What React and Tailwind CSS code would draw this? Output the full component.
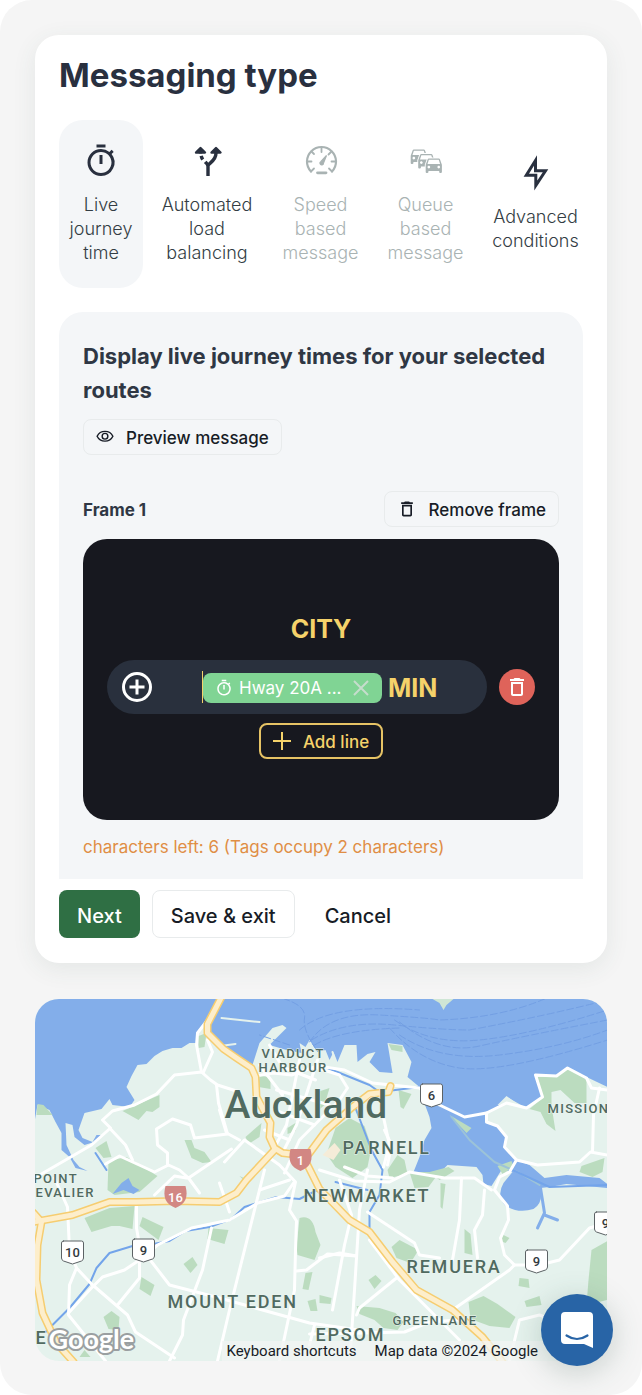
import React, { useState } from "react";
import { MdOutlineTimer, MdDeleteOutline } from "react-icons/md";

const RouteIcon = () => (
  <svg viewBox="0 0 36 36" className="size-9" fill="none" stroke="currentColor" strokeWidth="3.4">
    <path d="M19 33V23c0-3 8-4.500 8-13V7" />
    <path d="M19 22.500c-.8-1.700-1.800-2.500-2.800-3.700M13.800 16.500c-.9-1.300-1.300-2.300-1.600-3.700M11.500 10.500V7" />
    <path
      d="M7 9.500 11.500 5 16 9.500zM22.500 9.500 27 5l4.500 4.500z"
      fill="currentColor"
      strokeLinejoin="round"
      strokeWidth="2.400"
    />
  </svg>
);

const SpeedIcon = () => (
  <svg viewBox="0 0 36 36" className="size-9" fill="none" stroke="currentColor" strokeWidth="1.8" strokeLinecap="round">
    <path d="M8 28.500a14.500 14.500 0 1 1 21 0" strokeWidth="2.200" />
    <path d="M8 28.500l3-3M29 28.500l-3-3M4.500 18.500h4M28.500 18.500h4M18.500 4.500V9M8.500 8.500 11 11M28.500 8.500l-3 3" />
    <path d="M14.500 29.800H23" strokeWidth="2.800" />
    <path d="M23.500 12.500 20.500 20a1.800 1.800 0 1 1-2.500-1.500z" fill="currentColor" strokeWidth="1.200" />
  </svg>
);

const carPath =
  "M18.920 6.010C18.720 5.420 18.160 5 17.500 5h-11c-.66 0-1.210.42-1.420 1.010L3 12v8c0 .55.45 1 1 1h1c.55 0 1-.45 1-1v-1h12v1c0 .55.45 1 1 1h1c.55 0 1-.45 1-1v-8l-2.080-5.990zM6.500 16c-.83 0-1.500-.67-1.500-1.500S5.670 13 6.500 13s1.500.67 1.500 1.500S7.330 16 6.500 16zm11 0c-.83 0-1.500-.67-1.500-1.500s.67-1.500 1.500-1.500 1.500.67 1.500 1.500-.67 1.500-1.500 1.500zM5 11l1.500-4.500h11L19 11H5z";

const QueueIcon = () => (
  <svg viewBox="0 0 36 36" className="size-9">
    {[
      [0, 2],
      [7.500, 6.500],
      [15, 11],
    ].map(([x, y]) => (
      <g key={x} transform={`translate(${x} ${y}) scale(.9)`}>
        <path d="M3 12 5.500 5h13L21 12v7H3z" fill="#fff" stroke="#fff" strokeWidth="2" />
        <path d={carPath} fill="currentColor" fillRule="evenodd" />
      </g>
    ))}
  </svg>
);

const BoltIcon = () => (
  <svg viewBox="0 0 36 36" className="size-9" fill="none" stroke="currentColor" strokeWidth="3">
    <path d="M17.500 5.500v10.300h10L17.800 30.500V20.300H8.300z" />
  </svg>
);

const EyeIcon = () => (
  <svg viewBox="0 0 24 24" className="size-[18px]" fill="none" stroke="currentColor" strokeWidth="1.900">
    <path d="M1.500 11C3.500 6.800 7.500 4.500 12 4.500s8.500 2.300 10.500 6.500c-2 4.200-6 6.500-10.500 6.500S3.500 15.200 1.500 11z" />
    <circle cx="12" cy="11" r="3.800" />
  </svg>
);

const tabs = [
  { id: "live", label: "Live journey time", Icon: () => <MdOutlineTimer className="size-9" />, width: "w-[84px]" },
  { id: "load", label: "Automated load balancing", Icon: RouteIcon, width: "w-[116px]" },
  { id: "speed", label: "Speed based message", Icon: SpeedIcon, width: "w-[99px]", disabled: true },
  { id: "queue", label: "Queue based message", Icon: QueueIcon, width: "w-[99px]", disabled: true },
  { id: "advanced", label: "Advanced conditions", Icon: BoltIcon, width: "w-[109px]" },
];

// Map geometry
const water = [
  "M35 999H608V1087L587 1077 568 1068 557 1076 536 1075 543 1097 527 1108 507 1097 501 1105 487 1113V1122L498 1125 507 1137 505 1147 517 1160 530 1165 545 1178 567 1175 600 1178 608 1184V1188L567 1184 550 1187 541 1188Q544 1203 534 1209 518 1214 505 1205 497 1195 504 1183L513 1172 502 1170 492 1186 484 1184 483 1175 477 1167 448 1165 441 1172 424 1180 414 1172 420 1157 425 1140 432 1128 430 1117 423 1098 420 1087 408 1077 412 1062 403 1045 388 1043 393 1073 380 1072 370 1062 376 1052 368 1054 358 1062 357 1045H345L338 1062 334 1052 330 1060 326 1050 318 1052 310 1040 306 1047 300 1043 302 1053 287 1050 270 1045 287 1028 283 1025 273 1028 260 1043 253 1065 240 1057 230 1056 213 1035 207 1022 198 1033 197 1043 190 1043 182 1048 173 1048 163 1051 155 1056 147 1064 138 1065 132 1076 127 1087 135 1100 130 1107 113 1105 110 1099 102 1109 85 1113 79 1130 83 1138 93 1142 97 1135H102L98 1141 85 1145 75 1137 73 1125 66 1123 67 1145 74 1160 80 1167 88 1171 76 1168 70 1157 62 1150V1133L56 1122 50 1110 38 1105 35 1122z",
  "M413 1171 440 1174 422 1177z",
];

const parks = [
  "M38 1104 44 1105 53 1115H37z",
  "M123 1111 160 1095V1107L153 1112 147 1111 139 1120z",
  "M199 1036 207 1033 205 1047 199 1048z",
  "M185 1140 192 1140 195 1148 205 1152 212 1162 203 1163 192 1158z",
  "M96 1148 107 1141 112 1157 104 1158z",
  "M109 1161 127 1157 158 1176 140 1192 115 1195 108 1190z",
  "M85 1218 110 1208 135 1206 133 1229 120 1226 112 1226 92 1232z",
  "M143 1217 164 1227 159 1240 140 1226z",
  "M209 1228 229 1230 225 1244 208 1239z",
  "M184 1264 193 1257 198 1265 191 1273z",
  "M142 1277 155 1285 151 1296 140 1289z",
  "M104 1317 112 1311 120 1317 119 1330 109 1329z",
  "M300 1218Q313 1214 316 1232L321 1245 315 1260 298 1255 297 1247z",
  "M306 1273 313 1272 309 1290 303 1289z",
  "M308 1301 316 1299 318 1311 311 1311z",
  "M320 1295 332 1298 331 1304 320 1303z",
  "M357 1306 380 1308 396 1313 404 1322 398 1330 384 1328 375 1320 360 1314z",
  "M260 1075 271 1078V1089L259 1087z",
  "M246 1137 262 1123 260 1137 249 1144z",
  "M288 1128 299 1121 296 1131 288 1134z",
  "M318 1092 330 1088 325 1105 317 1112z",
  "M336 1128 350 1118 365 1126 372 1147 368 1167 353 1178 336 1167 327 1154z",
  "M389 1044 403 1046V1052L392 1050z",
  "M399 1090 412 1094 404 1109 401 1107z",
  "M398 1155 405 1160 408 1174 390 1178 388 1170z",
  "M410 1172 440 1172 429 1187 415 1188z",
  "M538 1077 557 1077 568 1069 587 1078V1103L575 1103 561 1090 552 1092 552 1106 556 1131 547 1124 541 1112 530 1109 543 1098z",
  "M582 1166 605 1158 603 1172 593 1177 580 1172z",
  "M450 1115 472 1128 467 1133z",
  "M498 1166 512 1161 514 1167 503 1174z",
  "M392 1247 400 1240 419 1250 411 1263 397 1258z",
  "M465 1229 471 1234 473 1255 465 1253z",
  "M369 1280 376 1275 382 1281 375 1289z",
  "M441 1183 446 1184 443 1209 441 1207z",
  "M504 1235 510 1238 506 1243 501 1241z",
  "M520 1278 529 1279 530 1288 519 1286z",
  "M469 1302 484 1296 498 1304 516 1317 510 1328 490 1326 471 1319z",
  "M525 1301 540 1296 542 1305 527 1307z",
  "M592 1250 608 1241V1300L587 1305 589 1280z",
  "M240 1176 251 1181 246 1182z",
  "M430 1172 449 1167 455 1171 440 1180z",
  "M85 1350 91 1357 80 1357z",
];

const roads = [
  "M35 1178 92 1145 111 1128 103 1120 113 1111 135 1105 157 1094 175 1075 202 1072 211 1080 218 1085 240 1092",
  "M111 1129 126 1145 133 1160",
  "M202 1072 197 1045 198 1033 208 1020",
  "M204 1072 213 1052 208 1040",
  "M217 1085 219 1103 228 1134 195 1138 191 1125 173 1119 157 1129 158 1145 168 1153 168 1165",
  "M106 1164 120 1156 155 1172 169 1165 180 1170 189 1178 232 1149",
  "M189 1178 200 1193M155 1195 175 1176 187 1178",
  "M55 1178 68 1207 70 1250 77 1268 92 1284 128 1315 136 1332 175 1358",
  "M77 1268 70 1285 69 1315 106 1361",
  "M69 1313 90 1290 103 1277 125 1270 143 1258 158 1245 192 1228 230 1220 258 1203 285 1196 294 1183",
  "M137 1205V1228L140 1245 140 1278 118 1305",
  "M143 1250 170 1285 220 1298 310 1323 380 1333",
  "M265 1170 230 1310 218 1361M212 1228 203 1270 184 1320 183 1335 170 1361",
  "M220 1183 230 1212",
  "M240 1140 227 1133 220 1110M225 1162 245 1140 280 1165 296 1182 290 1210 297 1221 296 1250 295 1290 280 1361",
  "M260 1190 290 1180M297 1271 307 1270 328 1254 357 1256",
  "M285 1173 300 1140 340 1100 348 1088 340 1075 318 1068",
  "M256 1076 274 1073 292 1075 318 1066 345 1070 373 1083 420 1088 440 1105 465 1117 487 1113 507 1103 527 1108 543 1097 536 1075 557 1076 568 1068 587 1078 592 1088 608 1090",
  "M270 1045 283 1067 316 1080M260 1065 283 1095M300 1060 287 1125 270 1157M318 1060 297 1125 282 1155M277 1090 330 1105M275 1110 315 1125M265 1130 290 1140",
  "M487 1113V1122L498 1126 507 1137 505 1147 517 1160 538 1165 580 1162 591 1152 608 1155M600 1088 594 1115 593 1152",
  "M517 1160 510 1172 500 1177 495 1190 508 1206 509 1220 501 1238 505 1255 515 1265",
  "M320 1170 355 1181 390 1182 410 1172 445 1178 475 1178 492 1190",
  "M385 1130 392 1145 388 1165M345 1167 368 1176 393 1178",
  "M382 1108 390 1145 384 1167M368 1170 360 1210 355 1290 351 1350",
  "M368 1212 415 1243 420 1255 440 1258M370 1240 400 1280 460 1340",
  "M462 1178 460 1220 453 1260M485 1190 483 1215 475 1230 478 1258",
  "M453 1310 510 1270 515 1265H540L560 1260 590 1228 608 1223",
  "M340 1180 352 1215 345 1245 333 1310M320 1258 340 1253 357 1256",
  "M397 1278 360 1308 357 1315M310 1334 365 1333 405 1332 430 1322 458 1320",
  "M510 1361 520 1320 540 1315 575 1328M310 1345 315 1325",
];

const motorways = [
  "M223 995 208 1024V1033L224 1049 237 1058 252 1068 256 1077 257 1097 271 1123 270 1137 275 1148 283 1153 300 1155 308 1165 320 1189 350 1220 370 1232 393 1262 417 1290 453 1310 483 1337 503 1362",
  "M275 1150 247 1180 237 1193 220 1202 177 1201 137 1202 110 1202 73 1215 34 1222",
  "M34 1213 42 1222 38 1245 37 1280 43 1313 57 1343 74 1362",
  "M391 1086 389 1092 370 1094 353 1107 327 1130 310 1153 300 1156",
];

const streams = [
  "M46 1332 70 1308 90 1284 97 1268 110 1253 133 1246M143 1246 170 1241 186 1231 210 1227 232 1219 245 1207 277 1197 300 1199 318 1190",
  "M328 1068 370 1085 380 1092 420 1087M356 1108 372 1150 383 1170 380 1195 370 1212V1228M336 1182 368 1190",
  "M96 1153 107 1170M513 1170 550 1187 608 1185",
];

const ferries = [
  "M317 1050Q303 1030 305 1018T285 999M310 1042Q330 1012 380 1015T440 1020Q500 1018 545 999",
  "M312 1040Q345 1020 395 1025T470 1030Q550 1015 608 1000M315 1045Q340 1030 400 1028",
  "M400 1022Q440 1055 480 1046T608 1020M395 1020Q430 1045 480 1040T608 1010",
  "M390 1028Q420 1062 460 1068T608 1040M400 1035Q440 1062 500 1055T608 1030",
  "M290 1045 260 1035M300 1030Q330 1003 420 1010",
];

const labels = [
  { text: "VIADUCT", x: 262, y: 1058, cls: "text-[13px] tracking-widest" },
  { text: "HARBOUR", x: 259, y: 1072, cls: "text-[13px] tracking-widest" },
  { text: "Auckland", x: 225, y: 1118, cls: "text-[39px]" },
  { text: "PARNELL", x: 343, y: 1154, cls: "text-[18px] tracking-widest" },
  { text: "NEWMARKET", x: 304, y: 1202, cls: "text-[18px] tracking-widest" },
  { text: "MISSION", x: 548, y: 1113, cls: "text-[13px] tracking-widest" },
  { text: "POINT", x: 34, y: 1183, cls: "text-[13px] tracking-widest" },
  { text: "EVALIER", x: 36, y: 1197, cls: "text-[13px] tracking-widest" },
  { text: "REMUERA", x: 407, y: 1273, cls: "text-[18px] tracking-widest" },
  { text: "MOUNT EDEN", x: 168, y: 1308, cls: "text-[18px] tracking-widest" },
  { text: "GREENLANE", x: 393, y: 1325, cls: "text-[13px] tracking-widest" },
  { text: "EPSOM", x: 316, y: 1341, cls: "text-[18px] tracking-widest" },
  { text: "E", x: 36, y: 1344, cls: "text-[18px]" },
];

const shields = [
  { n: "6", x: 432, y: 1095 },
  { n: "9", x: 144, y: 1250 },
  { n: "10", x: 73, y: 1252 },
  { n: "9", x: 537, y: 1261 },
  { n: "9", x: 606, y: 1223 },
  { n: "16", x: 176, y: 1197, red: true },
  { n: "1", x: 301, y: 1160, red: true },
];

const RoadMap = () => (
  <svg
    viewBox="35 999 573 362"
    preserveAspectRatio="xMidYMid slice"
    className="block h-full w-full font-[Roboto,sans-serif]"
    role="img"
    aria-label="Map of Auckland"
    fill="none"
    strokeLinejoin="round"
    strokeLinecap="round"
  >
    <rect x="0" y="900" width="700" height="600" fill="#e5f2ed" />
    {water.map((d) => <path key={d} d={d} fill="#83aeea" />)}
    <path d="M222 1018 260 1022M213 1047 236 1044M333 1052 337 1066M323 1052 328 1066" stroke="#e5f2ed" strokeWidth="2" />
    <path d="M433 999 454 999 447 1005 444 1010 440 1003z" fill="#cfe6d5" />
    <path d="M498 1105 507 1096 518 1104z" fill="#e5f2ed" />
    {parks.map((d) => <path key={d} d={d} fill="#bbdcbf" />)}
    <path d="M113 1194 122 1183 129 1178 133 1186 140 1190 134 1194 124 1190z" fill="#83aeea" />
    <path d="M323 1155 335 1143 341 1150 334 1160z" fill="#f5ecd8" />
    <path d="M452 1117 470 1140 495 1162 520 1173 540 1185" stroke="#9cc3d8" strokeWidth="2" />
    <path d="M541 1188 545 1213 538 1228M545 1215 558 1220" stroke="#83aeea" strokeWidth="3" />
    {ferries.map((d) => <path key={d} d={d} stroke="#739fe3" strokeWidth="1" strokeDasharray="7 3" />)}
    {streams.map((d) => <path key={d} d={d} stroke="#73a4ea" strokeWidth="2" />)}
    {roads.map((d) => <path key={d} d={d} stroke="#fff" strokeWidth="3" />)}
    {motorways.map((d) => <path key={d} d={d} stroke="#f6cd70" strokeWidth="8" />)}
    {motorways.map((d) => <path key={d} d={d} stroke="#fdeecb" strokeWidth="5" />)}
    {shields.map(({ n, x, y, red }) => (
      <g key={`${n}-${x}`} transform={`translate(${x} ${y})`}>
        {red ? (
          <path d="M-10-11H10C13 0 10 7 0 11-10 7-13 0-10-11z" fill="#d28783" />
        ) : (
          <path d="M-9-11H9Q11-11 11-9V6Q11 8 9 9L0 12-9 9Q-11 8-11 6V-9Q-11-11-9-11z" fill="#fff" stroke="#5c6265" />
        )}
        <text y={5} textAnchor="middle" fill={red ? "#fff" : "#333a3f"} className="text-[13px] font-medium">
          {n}
        </text>
      </g>
    ))}
    {labels.map(({ text, x, y, cls }) => (
      <text key={text} x={x} y={y} fill="#506a60" stroke="#eef6f2" strokeWidth="1" paintOrder="stroke" className={`${cls} font-medium`}>
        {text}
      </text>
    ))}
    <text x="49" y="1349" fill="#fff" stroke="#9a9fa1" strokeWidth="4" paintOrder="stroke" className="font-[Lato,sans-serif] text-[27px] font-bold">
      Google
    </text>
  </svg>
);

const outlineBtn =
  "flex h-9 items-center rounded-lg border border-[#e8ebec] px-3 text-[17px] font-medium text-[#171c26]";

const MessageBoard = () => {
  const [first, setFirst] = useState("CITY");
  const [second, setSecond] = useState("MIN");

  return (
    <div className="mt-3 flex flex-col rounded-3xl bg-[#17181f] px-6 py-[61px] text-[#f5d26a]">
      <input
        aria-label="Line 1"
        value={first}
        onChange={(e) => setFirst(e.target.value)}
        className="h-[54px] w-full bg-transparent pt-1 text-center text-[25px] font-bold outline-none"
      />
      <div className="mt-1.5 flex items-center gap-3">
        <div className="flex h-[54px] min-w-0 flex-1 items-center rounded-full bg-[#29303d] pl-3">
          <button type="button" aria-label="Add tag" className="text-white">
            <svg viewBox="0 0 36 36" className="size-9" fill="none" stroke="currentColor" strokeWidth="3">
              <circle cx="18" cy="18" r="13.500" />
              <path d="M18 10.500v15M10.500 18h15" />
            </svg>
          </button>
          <div className="flex min-w-0 flex-1 items-center justify-center">
            <span className="h-8 w-px bg-[#f5d26a]" />
            <span className="mt-0.5 flex h-[30px] w-[179px] items-center rounded-lg bg-[#80d494] px-3 text-white">
              <MdOutlineTimer className="size-[18px] shrink-0" />
              <span className="ml-1.5 flex-1 truncate pt-0.5 text-[17px]">Hway 20A ...</span>
              <button type="button" aria-label="Remove tag" className="text-[#c5ddcc]">
                <svg viewBox="0 0 18 18" className="size-[18px]" fill="none" stroke="currentColor" strokeWidth="2">
                  <path d="M2 2l14 14M16 2 2 16" />
                </svg>
              </button>
            </span>
            <input
              aria-label="Line 2"
              value={second}
              onChange={(e) => setSecond(e.target.value)}
              className="ml-1.5 w-[52px] bg-transparent pt-1 text-[25px] font-bold outline-none"
            />
          </div>
        </div>
        <button
          type="button"
          aria-label="Remove line"
          className="flex size-9 items-center justify-center rounded-full bg-[#df635a] text-white"
        >
          <MdDeleteOutline className="size-6" />
        </button>
      </div>
      <button
        type="button"
        className="mt-[9px] flex h-9 items-center gap-3 self-center rounded-lg border-2 border-[#e6c365] px-3 text-[17px] font-medium"
      >
        <svg viewBox="0 0 18 18" className="size-[18px]" fill="none" stroke="currentColor" strokeWidth="2">
          <path d="M9 0v18M0 9h18" />
        </svg>
        <span className="pt-1">Add line</span>
      </button>
    </div>
  );
};

const App = () => {
  const [active, setActive] = useState("live");

  return (
    <div className="min-h-screen rounded-[32px] bg-[#f5f5f5] px-[35px] pb-[34px] pt-[35px] font-[Inter,sans-serif]">
      <main className="rounded-3xl bg-white px-6 pb-[25px] pt-5 shadow-[0_6px_24px_rgba(60,90,80,0.09)]">
        <h1 className="text-[33px] font-bold leading-10 text-[#29303f]">Messaging type</h1>

        <nav className="-mr-2 mt-[25px] flex gap-1.5">
          {tabs.map(({ id, label, Icon, width, disabled }) => (
            <button
              key={id}
              type="button"
              disabled={disabled}
              onClick={() => setActive(id)}
              className={`${width} ${active === id ? "bg-[#f4f6f8]" : ""} ${
                disabled ? "text-[#a9b3b3]" : "text-[#29303f]"
              } flex h-[168px] shrink-0 flex-col items-center justify-center rounded-3xl px-2`}
            >
              <Icon />
              <span className={`mt-3 pt-0.5 text-[18px] font-light leading-6 ${disabled ? "" : "text-[#333d44]"}`}>
                {label}
              </span>
            </button>
          ))}
        </nav>

        <section className="mt-6 rounded-t-3xl bg-[#f4f6f8] px-6 pb-5 pt-[27px]">
          <h2 className="text-[22px] font-bold leading-[34px] text-[#2f3744]">
            Display live journey times for your selected routes
          </h2>
          <button type="button" className={`${outlineBtn} mt-3 gap-3`}>
            <EyeIcon />
            <span className="pt-1">Preview message</span>
          </button>

          <div className="mt-9 flex items-center justify-between">
            <h3 className="pt-1 text-[17px] font-bold text-[#2f3744]">Frame 1</h3>
            <button type="button" className={`${outlineBtn} gap-3`}>
              <MdDeleteOutline className="size-5" />
              <span className="pt-1">Remove frame</span>
            </button>
          </div>

          <MessageBoard />

          <p className="mt-[15px] text-[17px] leading-6 text-[#e08e45]">
            characters left: 6 (Tags occupy 2 characters)
          </p>
        </section>

        <div className="-mt-px flex gap-3 pt-3 text-[20px] font-medium text-[#171c26]">
          <button type="button" className="h-12 rounded-lg bg-[#2f6f44] px-[18px] pt-1 text-white">
            Next
          </button>
          <button type="button" className="h-12 rounded-lg border border-[#e8ebec] px-[18px] pt-1">
            Save &amp; exit
          </button>
          <button type="button" className="h-12 px-[18px] pt-1">
            Cancel
          </button>
        </div>
      </main>

      <div className="relative mt-9 h-[362px] overflow-hidden rounded-3xl">
        <RoadMap />
        <div className="absolute bottom-0 right-0 flex gap-[18px] bg-[#f1f4f3]/75 pl-1 pr-[69px] font-[Roboto,sans-serif] text-[15px] leading-5 text-[#171c26]">
          <button type="button">Keyboard shortcuts</button>
          <span>Map data ©2024 Google</span>
        </div>
      </div>

      <button
        type="button"
        aria-label="Open chat"
        className="fixed bottom-[29px] right-[29px] flex size-[72px] items-center justify-center rounded-full bg-[#2864a6] shadow-[0_6px_30px_rgba(60,90,80,0.25)]"
      >
        <svg viewBox="0 0 32 36" className="h-9 w-8" fill="none">
          <path d="M4 0h24q4 0 4 4v32l-9-4H4q-4 0-4-4V4q0-4 4-4z" fill="#fff" />
          <path d="M5.500 23.500q10.500 7 21 0" stroke="#2864a6" strokeWidth="2.200" strokeLinecap="round" />
        </svg>
      </button>
    </div>
  );
};

export default App;
